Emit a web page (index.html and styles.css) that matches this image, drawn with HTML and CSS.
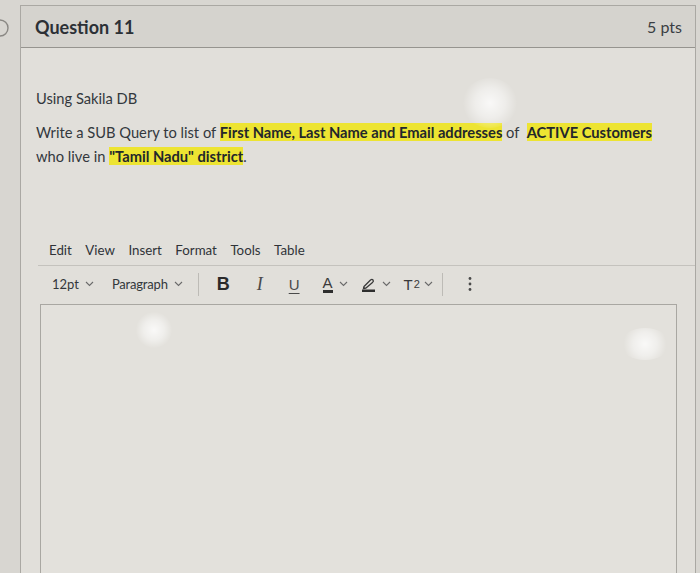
FILE: index.html
```html
<!DOCTYPE html>
<html lang="en">
<head>
    <meta charset="UTF-8">
    <meta name="viewport" content="width=device-width, initial-scale=1.0">
    <title>Question 11</title>
    <link rel="stylesheet" href="styles.css">
</head>
<body>
    <svg class="nav-mark" width="12" height="24" viewBox="0 0 12 24">
        <circle cx="0" cy="12" r="8" fill="none" stroke="#8a8884" stroke-width="1.4"/>
    </svg>

    <div class="question">
        <div class="question-header">
            <span class="question-name">Question 11</span>
            <span class="question-points">5 pts</span>
        </div>

        <div class="question-body">
            <p>Using Sakila DB</p>
            <p>Write a SUB Query to list of <mark>First Name, Last Name and Email addresses</mark> of&nbsp; <mark>ACTIVE Customers</mark><br>
            who live in <mark>"Tamil Nadu" district</mark>.</p>

            <div class="editor">
                <div class="menubar">
                    <span>Edit</span>
                    <span>View</span>
                    <span>Insert</span>
                    <span>Format</span>
                    <span>Tools</span>
                    <span>Table</span>
                </div>

                <div class="toolbar">
                    <span class="tool tool-select">12pt
                        <svg class="chev" width="9" height="6" viewBox="0 0 9 6"><polyline points="1,1 4.5,4.5 8,1" fill="none" stroke="#6a6a6a" stroke-width="1.1"/></svg>
                    </span>
                    <span class="tool tool-select">Paragraph
                        <svg class="chev" width="9" height="6" viewBox="0 0 9 6"><polyline points="1,1 4.5,4.5 8,1" fill="none" stroke="#6a6a6a" stroke-width="1.1"/></svg>
                    </span>
                    <span class="divider"></span>
                    <span class="tool tool-bold">B</span>
                    <span class="tool tool-italic">I</span>
                    <span class="tool tool-underline">U</span>
                    <span class="tool tool-color">
                        <span class="glyph-a">A</span>
                        <svg class="chev" width="9" height="6" viewBox="0 0 9 6"><polyline points="1,1 4.5,4.5 8,1" fill="none" stroke="#6a6a6a" stroke-width="1.1"/></svg>
                    </span>
                    <span class="tool tool-color">
                        <svg width="15" height="15" viewBox="0 0 15 15">
                            <path d="M3 9.5 L9.5 3 Q11 1.8 12 3 Q13 4.2 11.5 5.5 L5 11 L2.5 11.5 Z" fill="none" stroke="#3a3a3a" stroke-width="1.3" stroke-linejoin="round"/>
                            <rect x="1" y="12.5" width="13" height="2.5" fill="#2e2e2e"/>
                        </svg>
                        <svg class="chev" width="9" height="6" viewBox="0 0 9 6"><polyline points="1,1 4.5,4.5 8,1" fill="none" stroke="#6a6a6a" stroke-width="1.1"/></svg>
                    </span>
                    <span class="tool tool-sup">T<sup>2</sup>
                        <svg class="chev" width="9" height="6" viewBox="0 0 9 6"><polyline points="1,1 4.5,4.5 8,1" fill="none" stroke="#6a6a6a" stroke-width="1.1"/></svg>
                    </span>
                    <span class="divider"></span>
                    <span class="tool tool-more">
                        <svg width="4" height="16" viewBox="0 0 4 16">
                            <circle cx="2" cy="2.5" r="1.4" fill="#4a4a4a"/>
                            <circle cx="2" cy="8" r="1.4" fill="#4a4a4a"/>
                            <circle cx="2" cy="13.5" r="1.4" fill="#4a4a4a"/>
                        </svg>
                    </span>
                </div>

                <div class="edit-area"></div>
            </div>
        </div>
    </div>

    <!-- light glare from the photo -->
    <div class="glare glare-1"></div>
    <div class="glare glare-2"></div>
    <div class="glare glare-3"></div>
</body>
</html>
```

FILE: styles.css
```css
body {
    font-family: Lato, "Open Sans", sans-serif;
    background-color: #d8d6d1;
    margin: 0;
    padding: 5px 0 0 20px;
    height: 568px;
    overflow: hidden;
    color: #33383d;
}
.nav-mark {
    position: absolute;
    left: 0;
    top: 16px;
}
.question {
    width: 674px;
    height: 600px;
    border: 1px solid #aaa8a3;
    background-color: #e1dfda;
}
.question-header {
    height: 41px;
    background-color: #d5d3ce;
    border-bottom: 1px solid #96948f;
    display: flex;
    justify-content: space-between;
    align-items: center;
    padding: 0 13px 0 14px;
}
.question-name {
    font-size: 18px;
    font-weight: bold;
    color: #2c3036;
}
.question-points {
    font-size: 16px;
    color: #3a3e43;
}
.question-body {
    padding: 38px 0 0 15px;
}
.question-body p {
    margin: 0 0 10px 0;
    font-size: 14.7px;
    line-height: 24px;
}
mark {
    background-color: #ede432;
    color: #23272b;
    font-weight: bold;
}
.editor {
    margin: 66px 0 0 2px;
}
.menubar {
    display: flex;
    gap: 13.5px;
    padding: 0 0 0 11px;
    height: 31px;
    align-items: center;
    font-size: 13.3px;
    color: #2f3338;
    border-bottom: 1px solid #c4c2bd;
}
.toolbar {
    display: flex;
    align-items: center;
    height: 36px;
    padding-left: 14px;
    font-size: 13px;
    color: #33373b;
}
.tool {
    display: flex;
    align-items: center;
    gap: 6px;
}
.tool-select {
    margin-right: 18px;
}
.tool-select + .tool-select {
    margin-right: 15px;
    letter-spacing: -0.2px;
}
.divider {
    width: 1px;
    height: 23px;
    background-color: #bdbbb6;
}
.tool-bold {
    font-family: "Liberation Sans", Arial, sans-serif;
    font-weight: bold;
    font-size: 18px;
    margin: 0 27px 0 18px;
    color: #2a2a2a;
}
.tool-italic {
    font-family: "Liberation Serif", serif;
    font-style: italic;
    font-size: 18px;
    margin-right: 26px;
    color: #4a4a4a;
}
.tool-underline {
    font-family: "Liberation Sans", Arial, sans-serif;
    font-size: 15px;
    text-decoration: underline;
    text-underline-offset: 3px;
    margin-right: 23px;
    color: #4a4a4a;
}
.tool-color {
    margin-right: 13px;
}
.glyph-a {
    font-family: "Liberation Sans", Arial, sans-serif;
    font-size: 15px;
    line-height: 15px;
    border-bottom: 3px solid #2e2e2e;
    color: #3a3a3a;
}
.tool-sup {
    font-family: "Liberation Sans", Arial, sans-serif;
    font-size: 15px;
    color: #3a3a3a;
    gap: 4px;
    margin-right: 9px;
}
.tool-sup sup {
    font-size: 11px;
    margin-left: -3px;
}
.tool-more {
    margin-left: 25px;
}
.edit-area {
    margin: 2px 18px 0 2px;
    height: 300px;
    border: 1px solid #a9a7a2;
    border-bottom: none;
    background-color: #e3e1dc;
}
.glare {
    position: absolute;
    border-radius: 50%;
    background: radial-gradient(circle, rgba(255,255,255,0.8) 0%, rgba(255,255,255,0.45) 40%, rgba(255,255,255,0) 72%);
}
.glare-1 {
    left: 462px;
    top: 78px;
    width: 56px;
    height: 50px;
}
.glare-2 {
    left: 136px;
    top: 312px;
    width: 36px;
    height: 36px;
}
.glare-3 {
    left: 620px;
    top: 328px;
    width: 50px;
    height: 32px;
}
```
